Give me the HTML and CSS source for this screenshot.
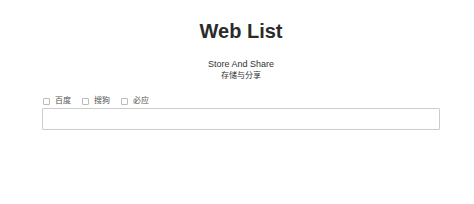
FILE: index.html
```html
<!DOCTYPE html>
<html lang="en">
<head>
    <meta charset="UTF-8">
    <meta name="viewport" content="width=device-width, initial-scale=1.0">
    <title>Web List</title>
    <link rel="stylesheet" href="styles.css">
</head>
<body>
    <div class="container">
        <h1 class="title">Web List</h1>
        <div class="subtitle">
            <p>Store And Share</p>
            <p class="cn">存储与分享</p>
        </div>
        <div class="engines">
            <label><input type="checkbox" name="baidu"> 百度</label>
            <label><input type="checkbox" name="sogou"> 搜狗</label>
            <label><input type="checkbox" name="bing"> 必应</label>
        </div>
        <input type="text" class="search-box" autocomplete="off">
    </div>
</body>
</html>
```

FILE: styles.css
```css
body {
    font-family: "Liberation Sans", "Noto Sans CJK SC", sans-serif;
    background-color: #fff;
    color: #333;
    margin: 0;
}
.container {
    width: 398px;
    margin-left: 42px;
    padding-top: 20px;
}
.title {
    font-size: 20px;
    font-weight: bold;
    text-align: center;
    color: #2b2b2b;
    margin: 0;
    line-height: 23px;
}
.subtitle {
    text-align: center;
    margin-top: 15px;
    font-size: 9px;
    color: #333;
}
.subtitle p {
    margin: 0;
    line-height: 12px;
}
.subtitle .cn {
    font-size: 8px;
}
.engines {
    display: flex;
    gap: 10px;
    margin-top: 13px;
    font-size: 8px;
    line-height: 12px;
}
.engines label {
    display: flex;
    align-items: center;
    color: #555;
}
.engines input {
    appearance: none;
    width: 7px;
    height: 7px;
    margin: 0 5px 0 1px;
    border: 1px solid #bbb;
    border-radius: 1px;
    background-color: #fff;
}
.search-box {
    display: block;
    width: 398px;
    height: 22px;
    margin: 1px 0 0;
    border: 1px solid #ccc;
    border-radius: 1px;
    box-sizing: border-box;
    outline: none;
}
```
